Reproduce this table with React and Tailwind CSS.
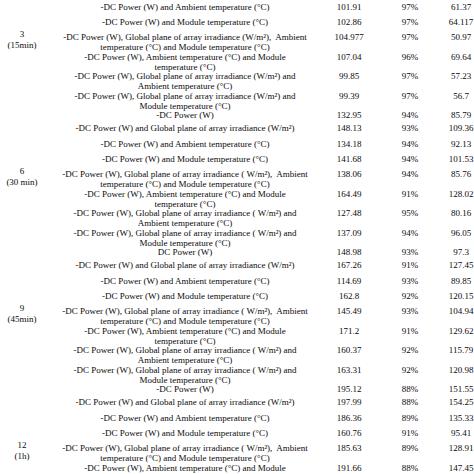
import React from 'react'

const font = { fontFamily: '"Liberation Serif", "Times New Roman", serif' }

// descriptions for the 8 input combinations of every horizon
const desc = (dash, spaced) => {
  const irr = spaced ? '( W/m²)' : '(W/m²)'
  return [
    { h: 'h-[13px]', lines: [`${dash ? '-' : ''}DC Power (W)`] },
    { h: 'h-[16px]', lines: ['-DC Power (W) and Global plane of array irradiance (W/m²)'] },
    { h: 'h-[15px]', lines: ['-DC Power (W) and Ambient temperature (°C)'] },
    { h: 'h-[15px]', lines: ['-DC Power (W) and Module temperature (°C)'] },
    {
      h: 'h-[20px]',
      lines: [
        `-DC Power (W), Global plane of array irradiance ${irr},\u00a0 Ambient`,
        'temperature (°C) and Module temperature (°C)',
      ],
    },
    {
      h: 'h-[19px]',
      lines: ['-DC Power (W), Ambient temperature (°C) and Module', 'temperature (°C)'],
    },
    {
      h: 'h-[20px]',
      lines: [`-DC Power (W), Global plane of array irradiance ${irr} and`, 'Ambient temperature (°C)'],
    },
    {
      h: 'h-[19px]',
      lines: [`-DC Power (W), Global plane of array irradiance ${irr} and`, 'Module temperature (°C)'],
    },
  ]
}

const groups = [
  {
    step: '3',
    time: '(15min)',
    dash: true,
    spaced: false,
    values: [
      ['', '', ''],
      ['', '', ''],
      ['101.91', '97%', '61.37'],
      ['102.86', '97%', '64.117'],
      ['104.977', '97%', '50.97'],
      ['107.04', '96%', '69.64'],
      ['99.85', '97%', '57.23'],
      ['99.39', '97%', '56.7'],
    ],
  },
  {
    step: '6',
    time: '(30 min)',
    dash: true,
    spaced: true,
    values: [
      ['132.95', '94%', '85.79'],
      ['148.13', '93%', '109.36'],
      ['134.18', '94%', '92.13'],
      ['141.68', '94%', '101.53'],
      ['138.06', '94%', '85.76'],
      ['164.49', '91%', '128.02'],
      ['127.48', '95%', '80.16'],
      ['137.09', '94%', '96.05'],
    ],
  },
  {
    step: '9',
    time: '(45min)',
    dash: false,
    spaced: true,
    values: [
      ['148.98', '93%', '97.3'],
      ['167.26', '91%', '127.45'],
      ['114.69', '93%', '89.85'],
      ['162.8', '92%', '120.15'],
      ['145.49', '93%', '104.94'],
      ['171.2', '91%', '129.62'],
      ['160.37', '92%', '115.79'],
      ['163.31', '92%', '120.98'],
    ],
  },
  {
    step: '12',
    time: '(1h)',
    dash: true,
    spaced: true,
    values: [
      ['195.12', '88%', '151.55'],
      ['197.99', '88%', '154.25'],
      ['186.36', '89%', '135.33'],
      ['160.76', '91%', '95.41'],
      ['185.63', '89%', '128.91'],
      ['191.66', '88%', '147.45'],
      ['', '', ''],
      ['', '', ''],
    ],
  },
]

function Group({ g }) {
  const rows = desc(g.dash, g.spaced)
  return (
    <div className="flex">
      <div className="w-[44px] flex flex-col items-center justify-center pb-[4px] leading-[11px]">
        <span>{g.step}</span>
        <span>{g.time}</span>
      </div>
      <div className="flex flex-col">
        {rows.map((r, i) => (
          <div key={i} className={`flex ${r.h}`}>
            <div className="w-[282px] flex flex-col items-center">
              {r.lines.map((l, j) => (
                <span key={j} className="whitespace-nowrap">{l}</span>
              ))}
            </div>
            <div className="w-[46px] flex justify-center whitespace-nowrap">{g.values[i][0]}</div>
            <div className="w-[76px] flex justify-center whitespace-nowrap">{g.values[i][1]}</div>
            <div className="w-[26px] flex justify-center whitespace-nowrap">{g.values[i][2]}</div>
          </div>
        ))}
      </div>
    </div>
  )
}

export default function App() {
  return (
    <div className="w-[474px] h-[474px] overflow-hidden bg-white text-[#0a0a0a] text-[9px] leading-[10px]" style={font}>
      <div className="-mt-[27px]">
        {groups.map(g => (
          <Group key={g.step} g={g} />
        ))}
      </div>
    </div>
  )
}
